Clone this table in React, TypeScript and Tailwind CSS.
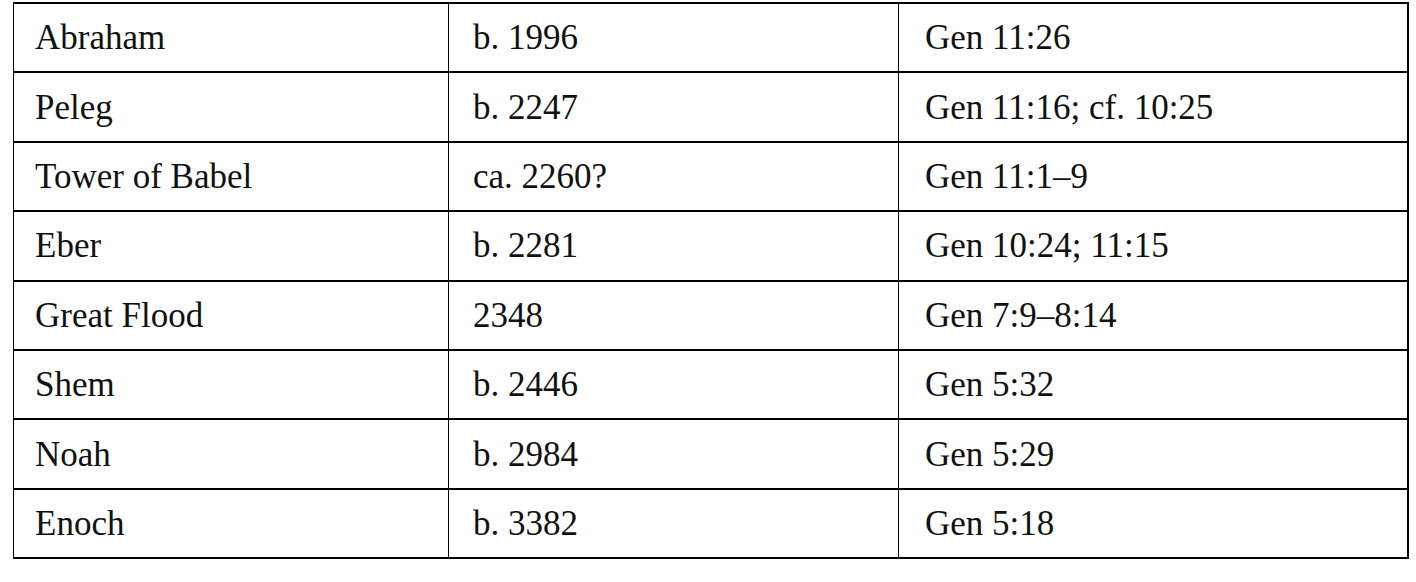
const rows = [
  ["Abraham", "b. 1996", "Gen 11:26"],
  ["Peleg", "b. 2247", "Gen 11:16; cf. 10:25"],
  ["Tower of Babel", "ca. 2260?", "Gen 11:1–9"],
  ["Eber", "b. 2281", "Gen 10:24; 11:15"],
  ["Great Flood", "2348", "Gen 7:9–8:14"],
  ["Shem", "b. 2446", "Gen 5:32"],
  ["Noah", "b. 2984", "Gen 5:29"],
  ["Enoch", "b. 3382", "Gen 5:18"],
];

export default function App() {
  return (
    <div className="min-h-[582px] w-[1416px] bg-white pl-[13px] pt-[2px]">
      <table className="w-[1396px] table-fixed border-separate border-spacing-0 border-t-2 border-l border-r-2 border-black font-['Liberation_Serif',serif] text-[35px] text-[#111]">
        <colgroup>
          <col className="w-[435px]" />
          <col className="w-[450px]" />
          <col />
        </colgroup>
        <tbody>
          {rows.map((r) => (
            <tr key={r[0]}>
              <td className="h-[69.4px] border-b-2 border-r border-black pl-[21px] align-middle leading-none">
                {r[0]}
              </td>
              <td className="h-[69.4px] border-b-2 border-r border-black pl-[24px] align-middle leading-none">
                {r[1]}
              </td>
              <td className="h-[69.4px] border-b-2 border-black pl-[26px] align-middle leading-none">
                {r[2]}
              </td>
            </tr>
          ))}
        </tbody>
      </table>
    </div>
  );
}
